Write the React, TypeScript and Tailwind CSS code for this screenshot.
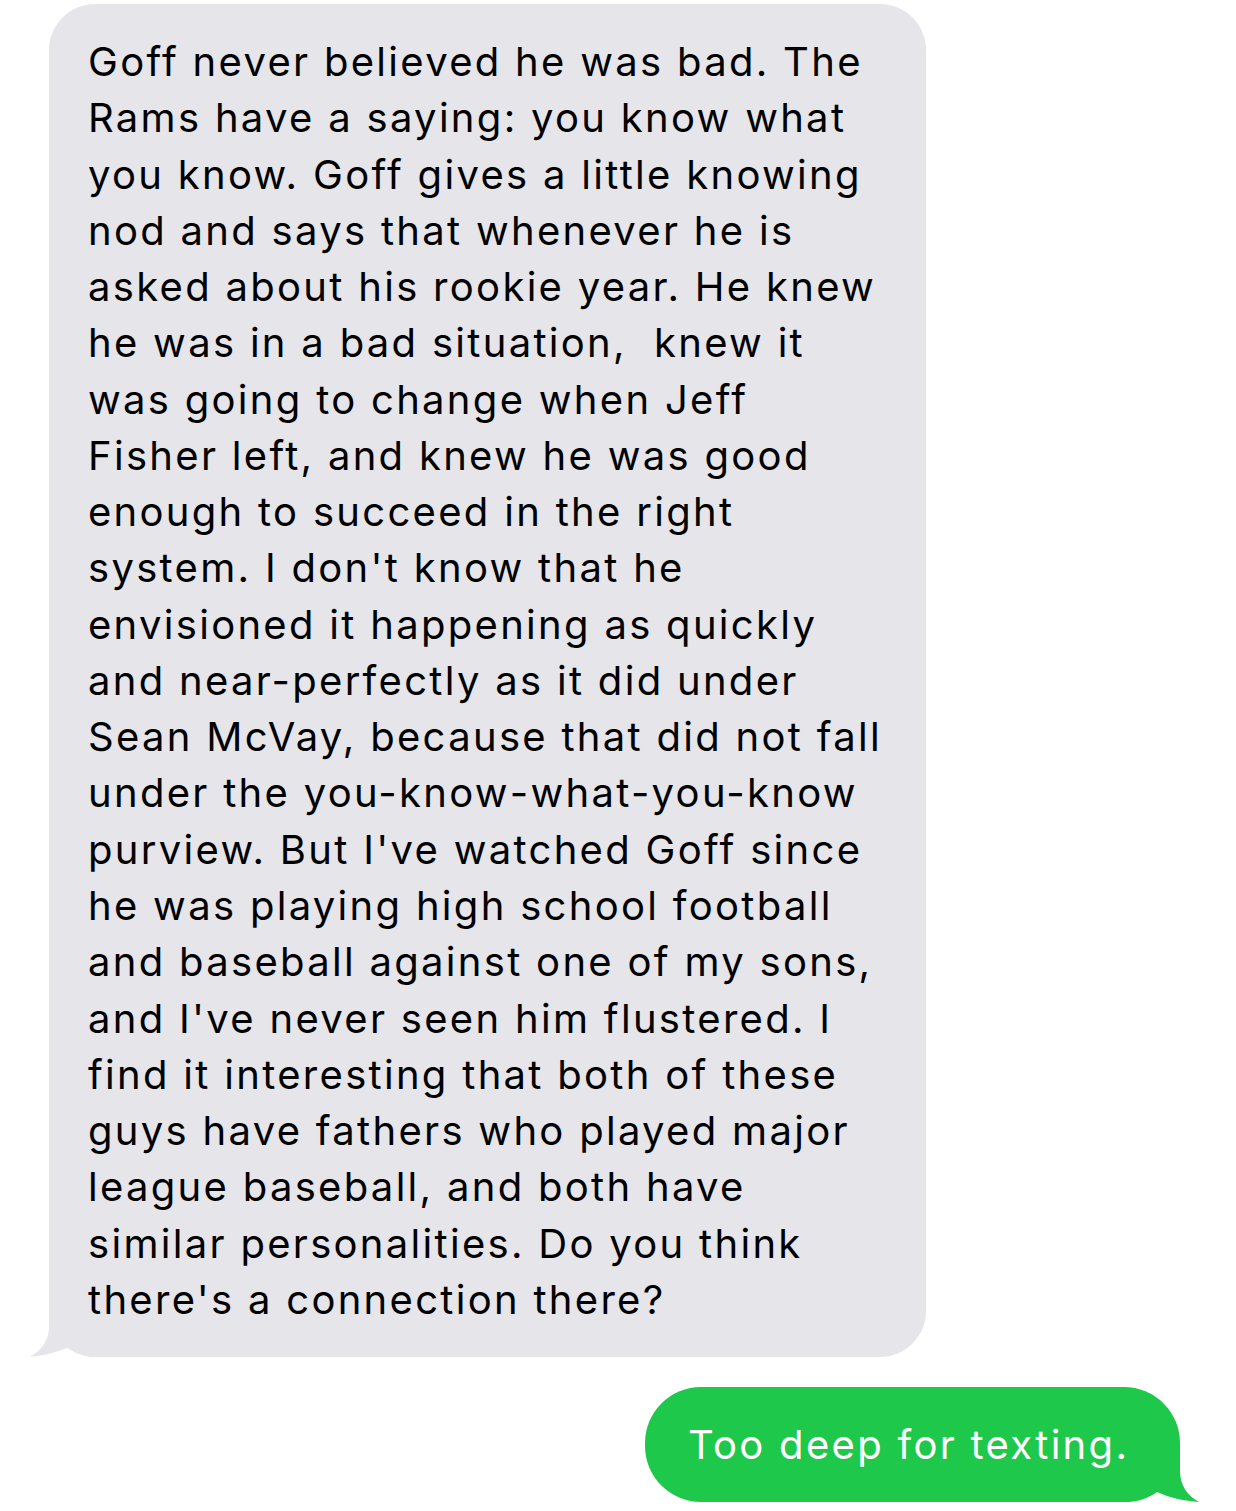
import React from "react";

const lines = [
  "Goff never believed he was bad. The",
  "Rams have a saying: you know what",
  "you know. Goff gives a little knowing",
  "nod and says that whenever he is",
  "asked about his rookie year. He knew",
  "he was in a bad situation,  knew it",
  "was going to change when Jeff",
  "Fisher left, and knew he was good",
  "enough to succeed in the right",
  "system. I don't know that he",
  "envisioned it happening as quickly",
  "and near-perfectly as it did under",
  "Sean McVay, because that did not fall",
  "under the you-know-what-you-know",
  "purview. But I've watched Goff since",
  "he was playing high school football",
  "and baseball against one of my sons,",
  "and I've never seen him flustered. I",
  "find it interesting that both of these",
  "guys have fathers who played major",
  "league baseball, and both have",
  "similar personalities. Do you think",
  "there's a connection there?",
];

export default function App() {
  return (
    <div className="min-h-[1511px] w-[1236px] bg-white font-['Inter','Liberation_Sans',Arial,sans-serif] overflow-hidden">
      <div className="pt-[4px] pl-[49px]">
        <div className="relative w-[877px] rounded-[46px] bg-[#e5e5ea] pl-[39px] pt-[30px] pb-[29px] text-[40px] tracking-[2.3px] leading-[56.27px] text-black">
          <svg
            className="absolute left-[-20px] bottom-0"
            width="70"
            height="46"
            viewBox="0 0 70 46"
          >
            <path
              d="M20 0 L20 16 C20 30 12 40 1 45.5 C15 45 28 41 41 36 C49 42 58 46 70 46 L70 0 Z"
              fill="#e5e5ea"
            />
          </svg>
          <div className="relative">
            {lines.map((l, i) => (
              <div key={i} className="whitespace-pre">
                {l}
              </div>
            ))}
          </div>
        </div>
      </div>
      <div className="flex justify-end pr-[56px] pt-[30px]">
        <div className="relative flex h-[115px] w-[535px] items-center rounded-[56px] bg-[#1ec84b] pl-[43px] text-[40px] tracking-[2.3px] text-white">
          <svg
            className="absolute right-[-19px] bottom-0"
            width="75"
            height="57"
            viewBox="0 0 75 57"
          >
            <path
              d="M0 0 L56 0 L56 26 C56 41 64 51 75 57 C61 56 46 53 33 47 C25 53 14 57 0 57 Z"
              fill="#1ec84b"
            />
          </svg>
          <span className="relative whitespace-pre">Too deep for texting.</span>
        </div>
      </div>
    </div>
  );
}
